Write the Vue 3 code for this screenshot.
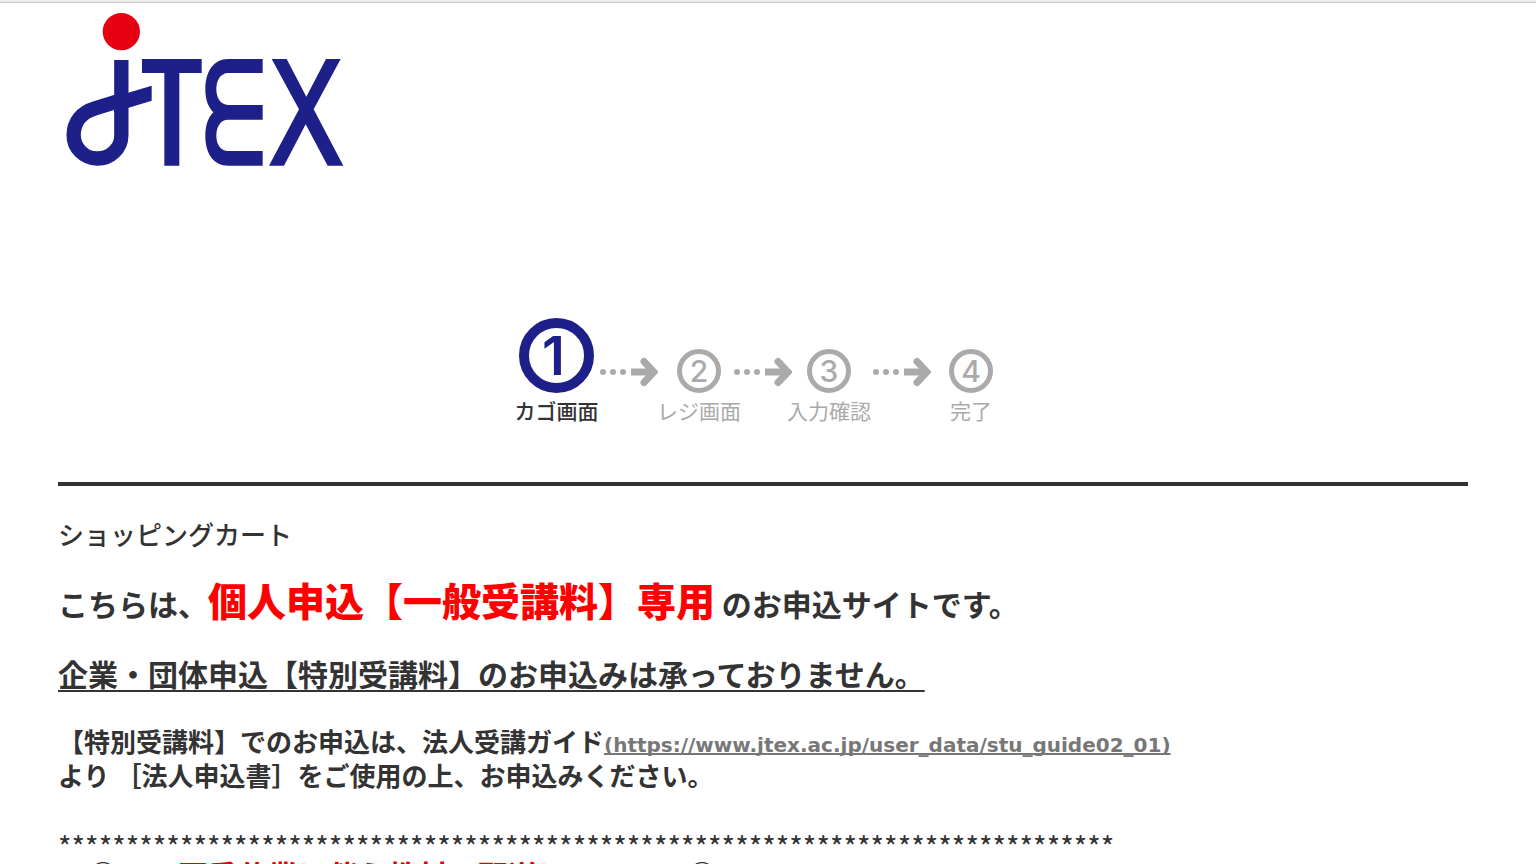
<script setup>
const steps = [
  { number: 1, label: 'カゴ画面', current: true },
  { number: 2, label: 'レジ画面' },
  { number: 3, label: '入力確認' },
  { number: 4, label: '完了' },
]
const divider = '*'.repeat(78)
</script>

<template>
  <div class="page">
    <header class="header">
      <svg class="logo" viewBox="81 36 831 462" role="img" aria-label="JTEX">
        <circle cx="244" cy="95" r="56" fill="#e60012" />
        <g fill="#1d2088">
          <path d="M244 180V407A71 69 0 0 1 101 405C101 365 125 337 165 325L240 302" fill="none" stroke="#1d2088" stroke-width="43" />
          <path d="M222 291L335 257V302L222 337Z" />
          <path d="M306 177H485V219H418V497H373V219H306Z" />
          <path d="M668 177H565C520 177 496 215 496 268C496 300 505 322 520 337C505 352 496 375 496 407C496 460 520 497 565 497H668V453H565C540 453 529 430 529 407C529 382 540 359 565 359H668V315H565C540 315 529 292 529 268C529 243 540 219 565 219H668Z" />
          <path d="M695 177H740L799 290L858 177H902L821 328L910 497H863L797 373L732 497H687L777 328Z" />
        </g>
      </svg>
    </header>

    <main class="main">
      <ol class="steps">
        <template v-for="step in steps" :key="step.number">
          <li v-if="step.number > 1" class="arrow" :class="'arrow-' + step.number" aria-hidden="true">
            <svg viewBox="0 0 58 44">
              <g fill="#aaa">
                <circle cx="3" cy="23" r="3" />
                <circle cx="13" cy="23" r="3" />
                <circle cx="23" cy="23" r="3" />
              </g>
              <path d="M31 23H53" fill="none" stroke="#aaa" stroke-width="7" />
              <path d="M44 12.500L54 23L44 33.500" fill="none" stroke="#aaa" stroke-width="7" stroke-linecap="round" />
            </svg>
          </li>
          <li class="step" :class="{ current: step.current }">
            <span class="circle">{{ step.number }}</span>
            <span class="label">{{ step.label }}</span>
          </li>
        </template>
      </ol>

      <h1 class="title">ショッピングカート</h1>
      <p class="lead">こちらは、<strong>個人申込【一般受講料】専用</strong> のお申込サイトです。</p>
      <p class="lead notice">企業・団体申込【特別受講料】のお申込みは承っておりません。</p>
      <p class="guide">
        【特別受講料】でのお申込は、法人受講ガイド<a href="#">(https://www.jtex.ac.jp/user_data/stu_guide02_01)</a><br />
        より ［法人申込書］をご使用の上、お申込みください。
      </p>
      <p class="divider">{{ divider }}</p>
      <p class="holiday">　○　　<strong>夏季休業に伴う教材の配送について</strong>　○</p>
    </main>
  </div>
</template>

<style>
body {
  margin: 0;
  background: #fff;
}
</style>

<style scoped>
.page {
  box-sizing: border-box;
  height: 100vh;
  overflow: hidden;
  border-top: 2px solid #eee;
  color: #333;
  font-family: "Noto Sans CJK JP", sans-serif;
}

.header {
  padding: 9px 67px 0;
  border-top: 1px solid #c8c8c8;
}

.logo {
  display: block;
  width: 277px;
  height: 154px;
  overflow: visible;
}

.main {
  padding: 0 68px 0 58px;
}

.steps {
  display: flex;
  justify-content: center;
  align-items: flex-end;
  margin: 152px 0 0;
  padding: 0 14px 56px 0;
  border-bottom: 4px solid #333;
  list-style: none;
}

.step {
  display: flex;
  flex-direction: column;
  align-items: center;
  width: 44px;
  color: #aaa;
}

.circle {
  display: flex;
  box-sizing: border-box;
  justify-content: center;
  align-items: center;
  width: 44px;
  height: 44px;
  border: 5px solid #aaa;
  border-radius: 50%;
  font: 500 30px/32px Inter, sans-serif;
}

.label {
  padding-top: 1px;
  font-size: 21px;
  line-height: 32px;
  white-space: nowrap;
}

.current {
  width: 75px;
  color: #333;
}

.current .label {
  font-weight: 500;
}

.current .circle {
  width: 75px;
  height: 75px;
  padding-right: 6px;
  border: 10px solid #1d2088;
  color: #1d2088;
  font-size: 54px;
  font-weight: 600;
}

.arrow {
  width: 58px;
  height: 44px;
  margin-bottom: 33px;
}

.arrow svg {
  display: block;
}

.arrow-2 {
  margin-left: 6px;
  margin-right: 19px;
}

.arrow-3 {
  margin-left: 13px;
  margin-right: 15px;
}

.arrow-4 {
  margin-left: 22px;
  margin-right: 18px;
}

.title {
  margin: 31px 0 0;
  font-size: 26px;
  font-weight: 500;
  line-height: 34px;
}

.lead {
  margin: 22px 0 0;
  font-size: 30px;
  font-weight: 700;
  line-height: 52px;
}

.lead strong {
  color: #f00;
  font-size: 39px;
}

.notice {
  margin-top: 18px;
  text-decoration: underline;
  text-decoration-thickness: 2px;
  text-decoration-skip-ink: none;
  text-underline-offset: 4px;
}

.guide {
  margin: 25px 0 0;
  font-size: 26px;
  font-weight: 700;
  line-height: 34px;
}

.guide a {
  color: #777;
  font-family: "DejaVu Sans", sans-serif;
  font-size: 20px;
  line-height: 20px;
  text-decoration-skip-ink: none;
}

.divider {
  margin: 38px 0 0;
  font-size: 29px;
  line-height: 30px;
}

.holiday {
  margin: 0;
  font-size: 30px;
  line-height: 28px;
}

.holiday strong {
  color: #d00;
}
</style>
